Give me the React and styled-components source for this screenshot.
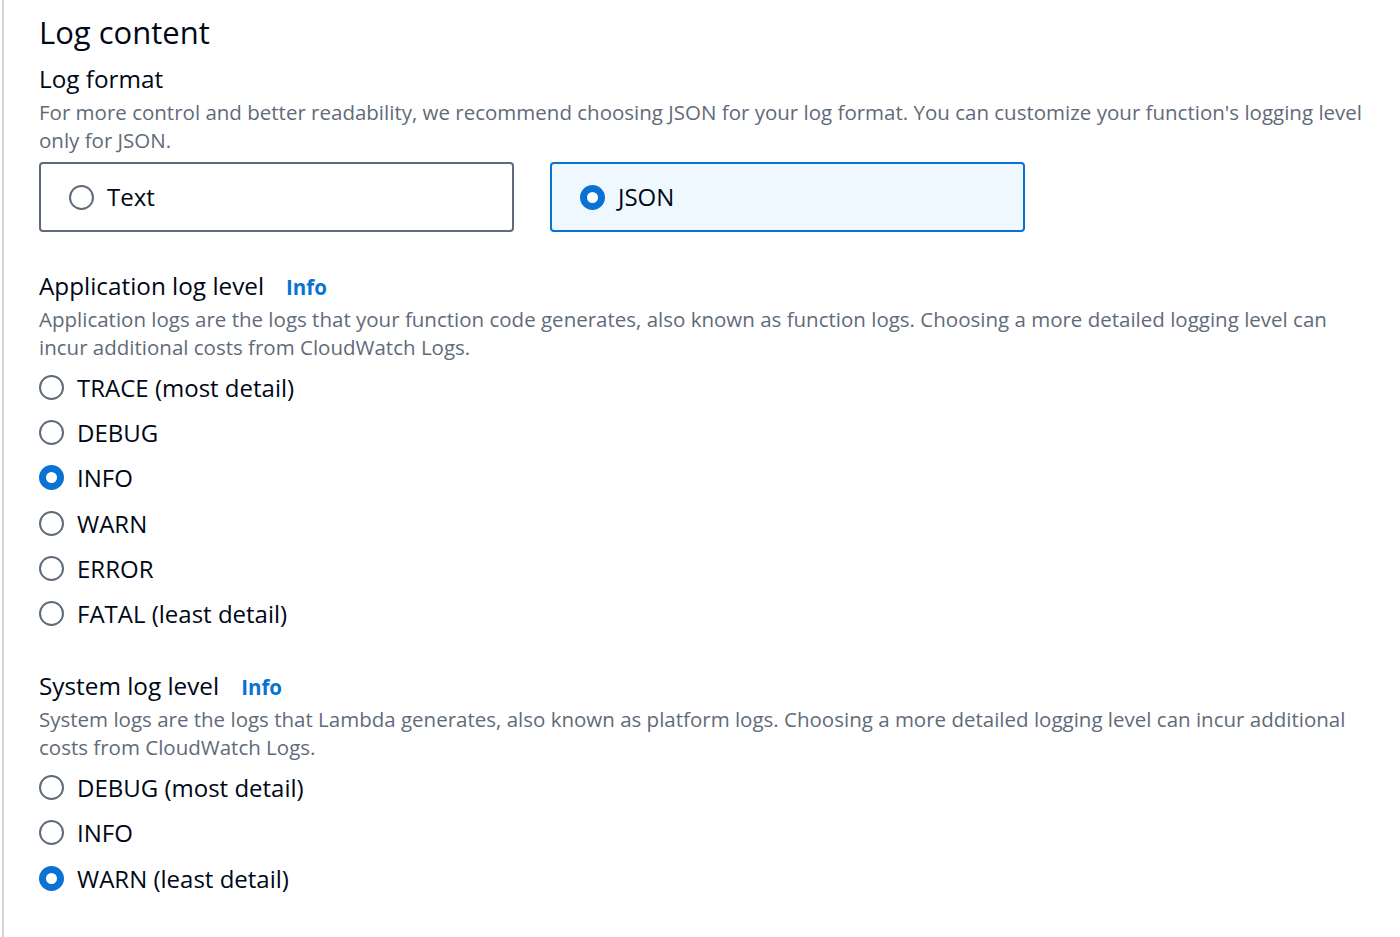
import React from "react";
import styled, { createGlobalStyle } from "styled-components";

const GlobalStyle = createGlobalStyle`
  html, body { margin: 0; padding: 0; background: #ffffff; }
  body { font-family: "Open Sans", "Noto Sans", Arial, sans-serif; color: #000716; }
`;

const Page = styled.div`
  margin-left: 2px;
  border-left: 2px solid #d1d5db;
  padding: 14px 30px 40px 35px;
  min-height: 937px;
  box-sizing: border-box;
`;

const Heading = styled.h2`
  margin: 0;
  font-size: 31px;
  line-height: 36px;
  font-weight: 400;
  color: #000716;
`;

const Section = styled.section`
  margin-top: ${(p) => p.$top}px;
`;

const LabelRow = styled.div`
  display: flex;
  align-items: baseline;
  gap: 22px;
`;

const Label = styled.div`
  font-size: 24.3px;
  line-height: 30px;
  color: #000716;
`;

const InfoLink = styled.a`
  font-size: 20.5px;
  font-weight: 700;
  color: #0972d3;
  text-decoration: none;
`;

const Description = styled.p`
  margin: 4px 0 0;
  font-size: 20.5px;
  line-height: 28px;
  color: #5f6b7a;
`;

const Tiles = styled.div`
  display: flex;
  gap: 36px;
  margin-top: 8px;
`;

const Tile = styled.label`
  box-sizing: border-box;
  width: 475px;
  height: 70px;
  display: flex;
  align-items: center;
  gap: 13px;
  padding-left: 28px;
  border: 2px solid ${(p) => (p.$checked ? "#0972d3" : "#5f6b7a")};
  border-radius: 4px;
  background: ${(p) => (p.$checked ? "#f0f8ff" : "#ffffff")};
  font-size: 24px;
  line-height: 30px;
  color: #000716;
`;

const RadioList = styled.div`
  display: flex;
  flex-direction: column;
  margin-top: 3.5px;
`;

const RadioRow = styled.label`
  display: flex;
  align-items: center;
  gap: 13px;
  height: 45.3px;
  font-size: 24px;
  color: #000716;
`;

const Circle = styled.span`
  box-sizing: border-box;
  width: 25px;
  height: 25px;
  border-radius: 50%;
  flex: none;
  border: ${(p) => (p.$checked ? "7.5px solid #0972d3" : "2px solid #5f6b7a")};
  background: #ffffff;
`;

function Radio({ label, checked }) {
  return (
    <RadioRow>
      <Circle $checked={checked} />
      <span>{label}</span>
    </RadioRow>
  );
}

const appLevels = [
  ["TRACE (most detail)", false],
  ["DEBUG", false],
  ["INFO", true],
  ["WARN", false],
  ["ERROR", false],
  ["FATAL (least detail)", false],
];

const sysLevels = [
  ["DEBUG (most detail)", false],
  ["INFO", false],
  ["WARN (least detail)", true],
];

export default function App() {
  return (
    <>
      <GlobalStyle />
      <Page>
        <Heading>Log content</Heading>
        <Section $top={14}>
          <Label>Log format</Label>
          <Description>
            For more control and better readability, we recommend choosing JSON for your log format. You can customize your function's logging level only for JSON.
          </Description>
          <Tiles>
            <Tile>
              <Circle />
              <span>Text</span>
            </Tile>
            <Tile $checked>
              <Circle $checked />
              <span>JSON</span>
            </Tile>
          </Tiles>
        </Section>
        <Section $top={39}>
          <LabelRow>
            <Label>Application log level</Label>
            <InfoLink href="#">Info</InfoLink>
          </LabelRow>
          <Description>
            Application logs are the logs that your function code generates, also known as function logs. Choosing a more detailed logging level can incur additional costs from CloudWatch Logs.
          </Description>
          <RadioList>
            {appLevels.map(([l, c]) => (
              <Radio key={l} label={l} checked={c} />
            ))}
          </RadioList>
        </Section>
        <Section $top={35}>
          <LabelRow>
            <Label>System log level</Label>
            <InfoLink href="#">Info</InfoLink>
          </LabelRow>
          <Description>
            System logs are the logs that Lambda generates, also known as platform logs. Choosing a more detailed logging level can incur additional costs from CloudWatch Logs.
          </Description>
          <RadioList>
            {sysLevels.map(([l, c]) => (
              <Radio key={l} label={l} checked={c} />
            ))}
          </RadioList>
        </Section>
      </Page>
    </>
  );
}
